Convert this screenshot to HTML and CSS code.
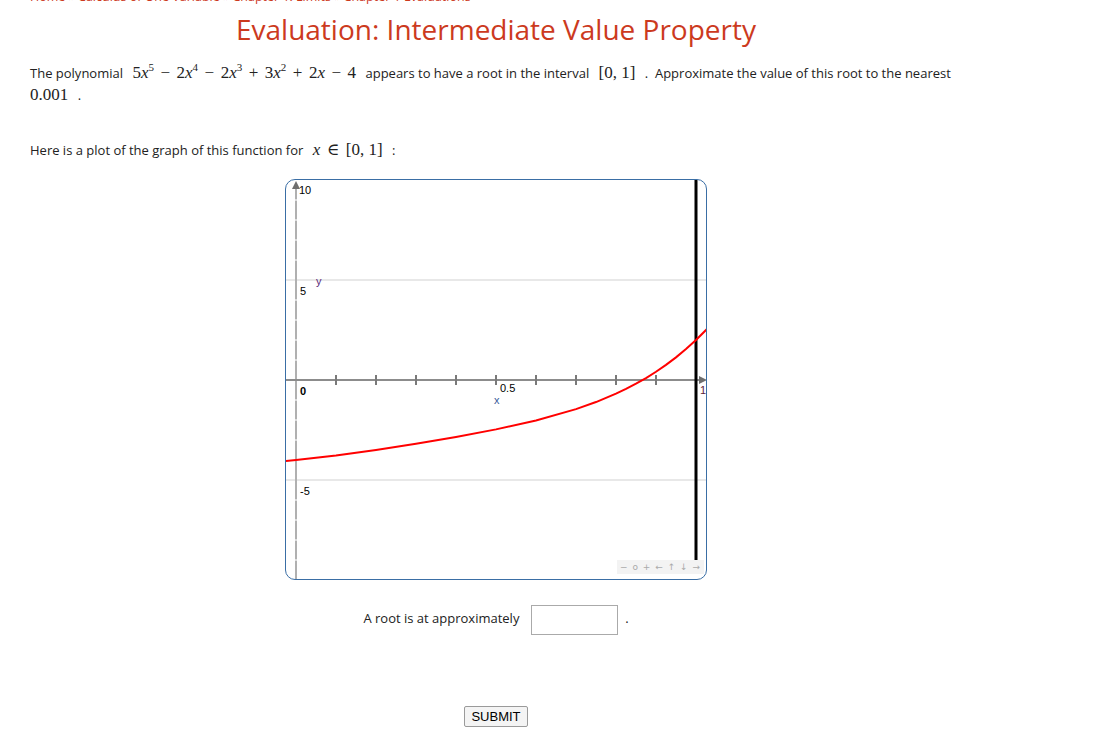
FILE: index.html
```html
<!DOCTYPE html>
<html lang="en">
<head>
  <meta charset="UTF-8">
  <title>Evaluation: Intermediate Value Property</title>
  <link rel="stylesheet" href="styles.css">
</head>
<body>
  <div class="crumbs">Home » Calculus of One Variable » Chapter 1: Limits » Chapter 1 Evaluations</div>

  <main class="page">
    <h1 class="title">Evaluation: Intermediate Value Property</h1>

    <p class="intro">The polynomial <span class="math">5<i>x</i><sup>5</sup><span class="op">−</span>2<i>x</i><sup>4</sup><span class="op">−</span>2<i>x</i><sup>3</sup><span class="op">+</span>3<i>x</i><sup>2</sup><span class="op">+</span>2<i>x</i><span class="op">−</span>4</span> appears to have a root in the interval <span class="math">[0, 1]</span> . &nbsp;Approximate the value of this root to the nearest<br><span class="math first">0.001</span> .</p>

    <p class="lead">Here is a plot of the graph of this function for <span class="math"><i>x</i><span class="op">∈</span>[0, 1]</span> :</p>

    <div class="plot">
      <svg width="420" height="399" viewBox="0 0 420 399">
        <line class="grid" x1="0" y1="100" x2="420" y2="100"/>
        <line class="grid" x1="0" y1="300" x2="420" y2="300"/>

        <line class="y-axis" x1="10" y1="6" x2="10" y2="399"/>
        <polygon class="arrow" points="10,1 6,9 14,9"/>
        <g class="minor">
          <line x1="10" y1="19" x2="10" y2="21"/><line x1="10" y1="39" x2="10" y2="41"/>
          <line x1="10" y1="59" x2="10" y2="61"/><line x1="10" y1="79" x2="10" y2="81"/>
          <line x1="10" y1="119" x2="10" y2="121"/><line x1="10" y1="139" x2="10" y2="141"/>
          <line x1="10" y1="159" x2="10" y2="161"/><line x1="10" y1="179" x2="10" y2="181"/>
          <line x1="10" y1="219" x2="10" y2="221"/><line x1="10" y1="239" x2="10" y2="241"/>
          <line x1="10" y1="259" x2="10" y2="261"/><line x1="10" y1="279" x2="10" y2="281"/>
          <line x1="10" y1="319" x2="10" y2="321"/><line x1="10" y1="339" x2="10" y2="341"/>
          <line x1="10" y1="359" x2="10" y2="361"/><line x1="10" y1="379" x2="10" y2="381"/>
        </g>

        <line class="x-axis" x1="0" y1="200" x2="414" y2="200"/>
        <polygon class="arrow" points="421,200 413,196 413,204"/>
        <g class="ticks">
          <line x1="50" y1="195" x2="50" y2="205"/><line x1="90" y1="195" x2="90" y2="205"/>
          <line x1="130" y1="195" x2="130" y2="205"/><line x1="170" y1="195" x2="170" y2="205"/>
          <line x1="210" y1="195" x2="210" y2="205"/><line x1="250" y1="195" x2="250" y2="205"/>
          <line x1="290" y1="195" x2="290" y2="205"/><line x1="330" y1="195" x2="330" y2="205"/>
          <line x1="370" y1="195" x2="370" y2="205"/>
        </g>

        <line class="bound" x1="410" y1="0" x2="410" y2="390"/>

        <polyline class="curve" points="-1,281.05 10,280 50,275.44 90,269.95 130,263.76 170,256.96 210,249.38 250,240.45 290,229.12 310,222.05 330,213.7 340,208.94 350,203.72 360,198.02 370,191.76 380,184.89 390,177.35 400,169.07 410,160 421,149"/>

        <text class="lbl" x="13" y="14">10</text>
        <text class="lbl" x="14" y="115">5</text>
        <text class="lbl name-y" x="30" y="105">y</text>
        <text class="lbl zero" x="14" y="215">0</text>
        <text class="lbl" x="214" y="212">0.5</text>
        <text class="lbl name-x" x="208" y="224">x</text>
        <text class="lbl" x="14" y="315">-5</text>
        <text class="lbl one" x="414" y="214">1</text>
      </svg>
      <div class="nav">− o + ← ↑ ↓ →</div>
    </div>

    <p class="answer">A root is at approximately <input type="text" class="box"> .</p>

    <div class="actions">
      <button class="submit">SUBMIT</button>
    </div>
  </main>
</body>
</html>
```

FILE: styles.css
```css
body {
  margin: 0;
  font-family: 'Open Sans', 'Noto Sans', sans-serif;
  font-size: 13px;
  color: #222;
  background: #fff;
}

.crumbs {
  margin-top: -10px;
  padding-left: 30px;
  height: 14px;
  line-height: 14px;
  font-size: 12.5px;
  color: #cc3a1e;
}

.page {
  width: 932px;
  padding-left: 30px;
}

.title {
  margin: 0;
  padding-top: 7px;
  text-align: center;
  font-size: 28px;
  font-weight: 400;
  line-height: 36px;
  color: #cc3a1e;
}

.intro {
  margin: 15px 0 0;
  line-height: 22px;
}

.math {
  font-family: 'Liberation Serif', 'DejaVu Serif', serif;
  font-size: 17px;
  padding: 0 6px;
}

.math.first {
  padding-left: 0;
}

.math .op {
  margin: 0 6.5px;
}

.math sup {
  font-size: 11px;
  line-height: 0;
}

.lead {
  margin: 33px 0 0;
  line-height: 22px;
}

.plot {
  position: relative;
  width: 420px;
  height: 399px;
  margin: 18px auto 0;
  border: 1px solid #3a6ea5;
  border-radius: 10px;
  overflow: hidden;
}

.plot svg {
  display: block;
}

.grid {
  stroke: #e8e8e8;
  stroke-width: 2;
}

.y-axis {
  stroke: #b0b0b0;
  stroke-width: 2;
}

.x-axis {
  stroke: #8c8c8c;
  stroke-width: 2;
}

.minor line {
  stroke: #dcdcdc;
  stroke-width: 2;
}

.ticks line {
  stroke: #7a7a7a;
  stroke-width: 2;
}

.arrow {
  fill: #6e6e6e;
}

.bound {
  stroke: #000;
  stroke-width: 3;
}

.curve {
  fill: none;
  stroke: #f00;
  stroke-width: 2;
}

.lbl {
  font-family: 'Liberation Sans', Arial, sans-serif;
  font-size: 11px;
  fill: #000;
}

.lbl.zero {
  font-weight: bold;
}

.lbl.name-y {
  fill: #5a2a7a;
}

.lbl.name-x {
  fill: #3a5a9a;
}

.lbl.one {
  fill: #5a1a3a;
}

.nav {
  position: absolute;
  right: 2px;
  bottom: 5px;
  padding: 2px 3px;
  background: #f3f3f3;
  color: #aaa;
  font-family: 'DejaVu Sans', sans-serif;
  font-size: 9px;
  letter-spacing: 1px;
}

.answer {
  margin: 22px 0 0;
  text-align: center;
  line-height: 32px;
}

.box {
  width: 85px;
  height: 28px;
  margin: 0 4px 0 8px;
  padding: 0;
  border: 1px solid #aaa;
  vertical-align: middle;
}

.actions {
  margin-top: 71px;
  text-align: center;
}

.submit {
  font-family: 'Liberation Sans', Arial, sans-serif;
  font-size: 13px;
  padding: 2px 6px;
  background: #f4f4f4;
  border: 1px solid #9a9a9a;
  border-radius: 2px;
  color: #000;
}
```
